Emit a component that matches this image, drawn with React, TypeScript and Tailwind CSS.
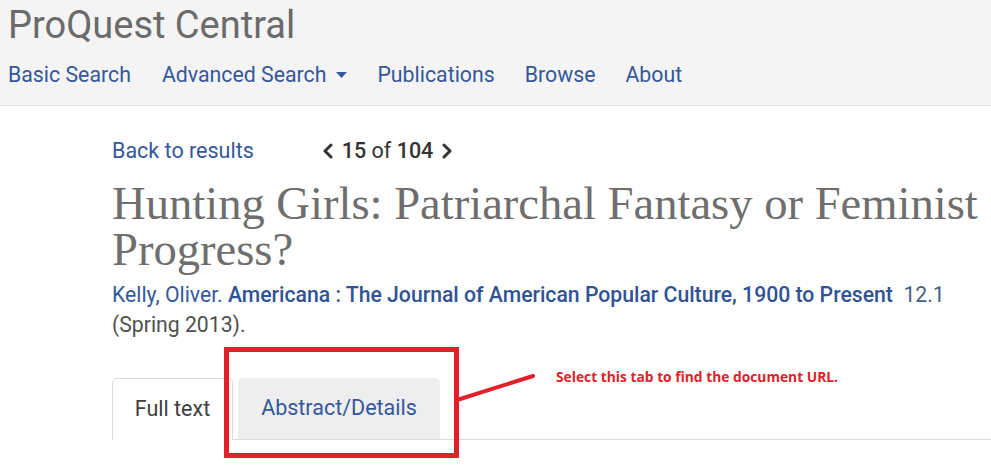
import React from "react";

const roboto = { fontFamily: "Roboto, 'Liberation Sans', sans-serif" };

function Chevron({ dir }: { dir: "left" | "right" }) {
  return (
    <svg width="12" height="16" viewBox="0 0 12 16" className="inline-block">
      <path
        d={dir === "left" ? "M9 2 L3 8 L9 14" : "M3 2 L9 8 L3 14"}
        fill="none"
        stroke="#333333"
        strokeWidth="3"
        strokeLinecap="round"
        strokeLinejoin="round"
      />
    </svg>
  );
}

export default function App() {
  return (
    <div className="relative w-[991px] h-[471px] overflow-hidden bg-white" style={roboto}>
      {/* Header */}
      <header className="h-[106px] bg-[#f4f4f4] border-b border-[#e4e4e4] pt-[6px]">
        <div className="pl-[8px] text-[38px] leading-[38px] text-[#6b6b6b]">ProQuest Central</div>
        <nav className="mt-[19px] flex items-center gap-[30px] pl-[8px] text-[21.3px] leading-[24px] text-[#34589a]">
          <span className="mr-[1px]">Basic Search</span>
          <span className="flex items-center gap-[10px]">
            Advanced Search
            <svg width="11" height="6" viewBox="0 0 11 6">
              <path d="M0 0 L11 0 L5.5 6 Z" fill="#34589a" />
            </svg>
          </span>
          <span>Publications</span>
          <span>Browse</span>
          <span>About</span>
        </nav>
      </header>

      {/* Content */}
      <main className="pl-[112px] pt-[33px]">
        <div className="flex items-center text-[21.5px] leading-[24px]">
          <span className="text-[#34589a]">Back to results</span>
          <span className="ml-[68px] flex items-center gap-[8px] text-[#333333]">
            <Chevron dir="left" />
            <span>
              <span className="font-medium">15</span> of <span className="font-medium">104</span>
            </span>
            <Chevron dir="right" />
          </span>
        </div>

        <h1
          className="mt-[17px] text-[46.6px] leading-[46px] text-[#6e6e6e] whitespace-nowrap"
          style={{ fontFamily: "'Liberation Serif', 'DejaVu Serif', serif" }}
        >
          Hunting Girls: Patriarchal Fantasy or Feminist
          <br />
          Progress?
        </h1>

        <div className="mt-[8px] text-[21.2px] leading-[30px] whitespace-nowrap">
          <span className="text-[#34589a]">Kelly, Oliver. </span>
          <span className="text-[#2f5394] font-medium">
            Americana : The Journal of American Popular Culture, 1900 to Present
          </span>
          <span className="text-[#4a5f85]">&nbsp; 12.1</span>
          <br />
          <span className="text-[#505050]">(Spring 2013).</span>
        </div>

        {/* Tabs */}
        <div className="mt-[38px] flex items-end gap-[5px] border-b border-[#dcdcdc] h-[62px]">
          <div className="-mb-px h-[62px] w-[121px] flex items-center justify-center rounded-t-[5px] border border-b-0 border-[#dcdcdc] bg-white text-[21.5px] text-[#404040]">
            Full text
          </div>
          <div className="h-[61px] w-[202px] flex items-center justify-center rounded-t-[5px] bg-[#eeeeee] text-[21.5px] text-[#34589a]">
            Abstract/Details
          </div>
        </div>
      </main>

      {/* Annotation overlay */}
      <div className="absolute left-[224px] top-[347px] w-[235px] h-[111px] border-[5px] border-[#e3202a]" />
      <svg className="absolute left-0 top-0" width="991" height="471" viewBox="0 0 991 471">
        <line x1="457" y1="400" x2="533" y2="376" stroke="#e3202a" strokeWidth="4" strokeLinecap="round" />
      </svg>
      <div
        className="absolute left-[556px] top-[368px] text-[13.8px] leading-[18px] font-bold text-[#e3202a] whitespace-nowrap"
        style={{ fontFamily: "'Open Sans', 'DejaVu Sans', sans-serif" }}
      >
        Select this tab to find the document URL.
      </div>
    </div>
  );
}
